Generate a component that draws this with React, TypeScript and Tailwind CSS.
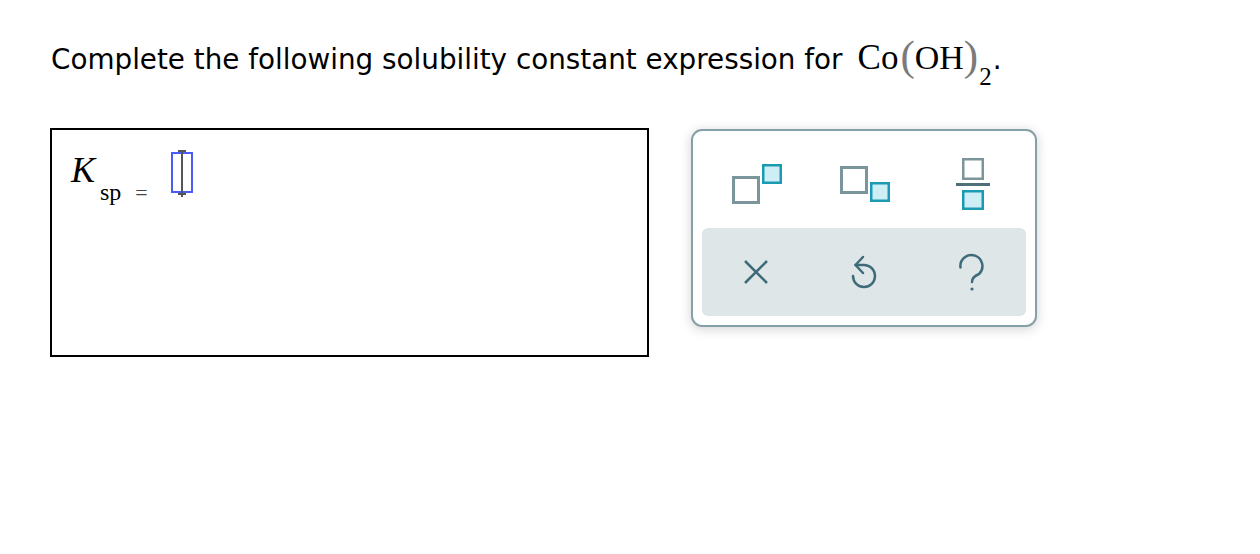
import React from "react";

const STROKE = "#3e6b7a";

function SuperscriptIcon() {
  return (
    <svg width="60" height="60" viewBox="0 0 60 60">
      <rect x="7.5" y="23.5" width="25" height="25" fill="none" stroke="#7a969b" strokeWidth="3" />
      <rect x="37.25" y="11.25" width="17.5" height="17.5" fill="#cdeef4" stroke="#1a9bb3" strokeWidth="2.5" />
    </svg>
  );
}

function SubscriptIcon() {
  return (
    <svg width="60" height="60" viewBox="0 0 60 60">
      <rect x="7.5" y="13.5" width="25" height="25" fill="none" stroke="#7a969b" strokeWidth="3" />
      <rect x="37.25" y="29.25" width="17.5" height="17.5" fill="#cdeef4" stroke="#1a9bb3" strokeWidth="2.5" />
    </svg>
  );
}

function FractionIcon() {
  return (
    <svg width="60" height="60" viewBox="0 0 60 60">
      <rect x="21.25" y="5.25" width="19.5" height="19.5" fill="none" stroke="#7a969b" strokeWidth="2.5" />
      <rect x="14" y="29" width="34" height="3" fill="#4e6e78" />
      <rect x="21.25" y="37.25" width="19.5" height="17.5" fill="#cdeef4" stroke="#1a9bb3" strokeWidth="2.5" />
    </svg>
  );
}

function ClearIcon() {
  return (
    <svg width="40" height="40" viewBox="0 0 40 40" fill="none" stroke={STROKE} strokeWidth="2.5">
      <path d="M9 9 L31 31 M31 9 L9 31" />
    </svg>
  );
}

function UndoIcon() {
  return (
    <svg width="40" height="40" viewBox="0 0 40 40" fill="none" stroke={STROKE} strokeWidth="2.5" strokeLinecap="round" strokeLinejoin="round">
      <path d="M11.5 13 H20 A11 11 0 1 1 9 24" />
      <path d="M19 5 L11.5 13 L19 21" />
    </svg>
  );
}

function HelpIcon() {
  return (
    <svg width="40" height="40" viewBox="0 0 40 40" fill="none" stroke={STROKE} strokeWidth="2.5" strokeLinecap="round">
      <path d="M8.5 15.5 A11 11 0 1 1 27 22 Q20 25 20 30" />
      <circle cx="20" cy="37" r="1.6" fill={STROKE} stroke="none" />
    </svg>
  );
}

export default function App() {
  const serif = "font-['Liberation_Serif',serif]";
  return (
    <div className="w-[1260px] h-[554px] bg-white overflow-hidden px-[50px] pt-[33px] font-['DejaVu_Sans','Verdana',sans-serif] text-black">
      <p className="flex items-baseline pl-[1px] h-[45px] text-[27.8px] leading-none">
        <span>Complete the following solubility constant expression for</span>
        <span className={`${serif} text-[35px] leading-none ml-[15px]`}>Co</span>
        <span className={`${serif} text-[43px] leading-none text-[#7b7b7b] ml-[2px] relative top-[1px]`}>(</span>
        <span className={`${serif} text-[34px] leading-none`}>OH</span>
        <span className={`${serif} text-[43px] leading-none text-[#7b7b7b] relative top-[1px]`}>)</span>
        <span className={`${serif} text-[25px] leading-none relative top-[16px] ml-[1px]`}>2</span>
        <span className="ml-[1px]">.</span>
      </p>

      <div className="flex items-start mt-[50px]">
        <div className="w-[599px] h-[229px] border-2 border-black">
          <div className={`flex items-start pt-[20px] pl-[19px] ${serif}`}>
            <span className="italic text-[36px] leading-none mt-[2px]">K</span>
            <span className="text-[24px] leading-none mt-[30px] ml-[5px]">sp</span>
            <span className="text-[22px] leading-none mt-[32px] ml-[14px] text-[#444]">=</span>
            <span className="relative ml-[23px] mt-[2px] w-[22px] h-[41px] border-2 border-[#4a5cf5]">
              <span className="absolute left-[8px] top-[-4px] w-[2px] h-[47px] bg-[#555]" />
              <span className="absolute left-[5px] top-[-4px] w-[8px] h-[2px] bg-[#555]" />
              <span className="absolute left-[5px] bottom-[-4px] w-[8px] h-[2px] bg-[#555]" />
            </span>
          </div>
        </div>

        <div className="ml-[42px] mt-[1px] w-[346px] h-[198px] border-2 border-[#86a1a6] rounded-[11px] bg-white shadow-[0_2px_12px_rgba(0,0,0,0.18)] flex flex-col">
          <div className="h-[97px] px-[9px] flex items-start pt-[23px]">
            <div className="w-[108px] flex justify-center">
              <SuperscriptIcon />
            </div>
            <div className="w-[108px] flex justify-center">
              <SubscriptIcon />
            </div>
            <div className="w-[108px] flex justify-center">
              <FractionIcon />
            </div>
          </div>
          <div className="mx-[9px] h-[88px] rounded-[6px] bg-[#dfe6e8] flex">
            <div className="w-[108px] flex items-center justify-center">
              <ClearIcon />
            </div>
            <div className="w-[108px] flex items-center justify-center">
              <UndoIcon />
            </div>
            <div className="w-[108px] flex items-center justify-center">
              <HelpIcon />
            </div>
          </div>
        </div>
      </div>
    </div>
  );
}
